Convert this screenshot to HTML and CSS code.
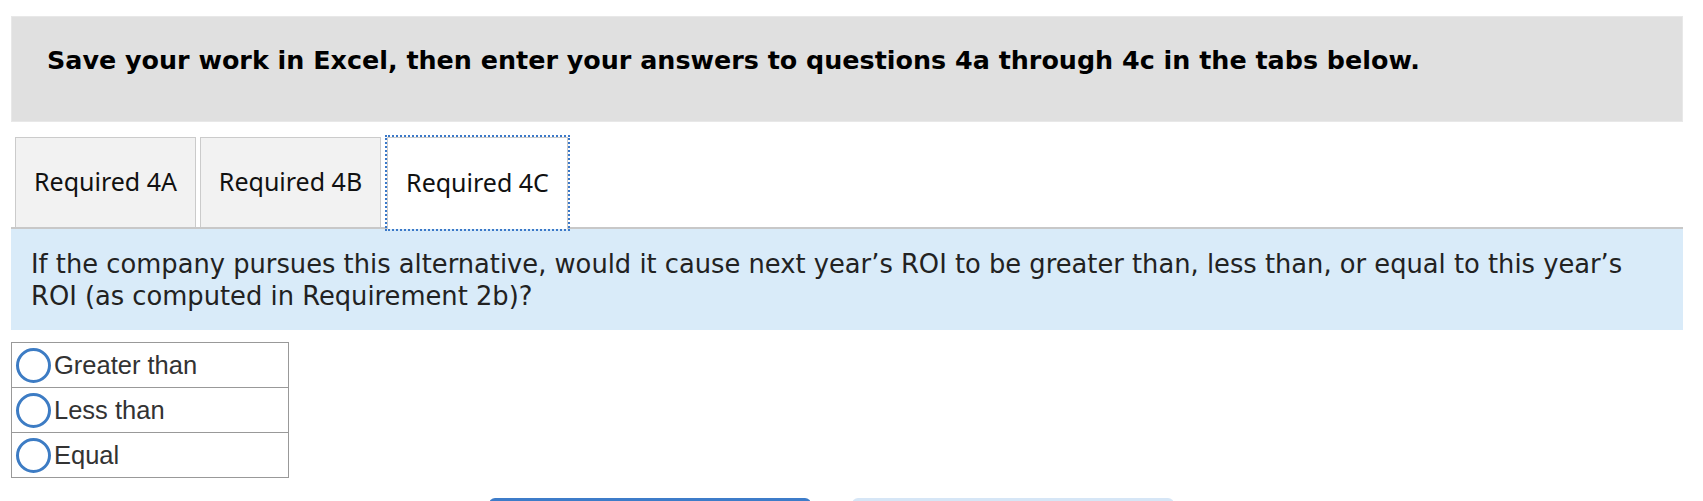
FILE: index.html
```html
<!doctype html>
<html lang="en">
  <head>
    <meta charset="UTF-8" />
    <title>Required 4C</title>
    <link rel="stylesheet" href="styles.css">
  </head>
  <body>
    <div class="instructions">
      Save your work in Excel, then enter your answers to questions 4a through 4c in the tabs below.
    </div>

    <div class="tabs">
      <div class="tab">Required 4A</div>
      <div class="tab">Required 4B</div>
      <div class="tab active">Required 4C</div>
    </div>

    <div class="question">
      If the company pursues this alternative, would it cause next year’s ROI to be greater than, less than, or equal to this year’s ROI (as computed in Requirement 2b)?
    </div>

    <div class="choices">
      <label class="choice"><span class="radio"></span>Greater than</label>
      <label class="choice"><span class="radio"></span>Less than</label>
      <label class="choice"><span class="radio"></span>Equal</label>
    </div>

    <div class="nav">
      <button class="prev"></button>
      <button class="next"></button>
    </div>
  </body>
</html>
```

FILE: styles.css
```css
html,
body {
  height: 100%;
  overflow: hidden;
}
body {
  margin: 0;
  box-sizing: border-box;
  padding: 16px 20px 0 11px;
  background: white;
  font-family: "DejaVu Sans", Verdana, sans-serif;
}
.instructions {
  height: 106px;
  box-sizing: border-box;
  padding: 28px 35px 0;
  background-color: #e0e0e0;
  border: 1px solid #e8e8e8;
  font-weight: bold;
  font-size: 25.4px;
  color: #000;
}
.tabs {
  display: flex;
  gap: 4px;
  margin-top: 15px;
  padding-left: 4px;
  height: 90px;
}
.tab {
  width: 181px;
  box-sizing: border-box;
  display: flex;
  align-items: center;
  justify-content: center;
  padding-bottom: 4px;
  background-color: #f2f2f2;
  border: 1px solid #cbcbcb;
  border-bottom: none;
  font-family: "Noto Sans", "Open Sans", sans-serif;
  font-size: 25px;
  color: #111;
}
.tab.active {
  position: relative;
  z-index: 1;
  margin-left: 2px;
  height: 92px;
  background: white;
  outline: 2px dotted #3a78c8;
}
.question {
  height: 103px;
  box-sizing: border-box;
  padding: 19px 20px 0;
  background-color: #d9ebf9;
  border-top: 2px solid #c8c8c8;
  font-size: 25.75px;
  line-height: 32px;
  color: #222;
}
.choices {
  width: 276px;
  margin-top: 12px;
  border: 1px solid #999;
}
.choice {
  display: flex;
  align-items: center;
  gap: 3px;
  height: 44px;
  padding-left: 4px;
  font-family: "Liberation Sans", Arial, sans-serif;
  font-size: 25.5px;
  color: #333;
}
.choice + .choice {
  border-top: 1px solid #999;
}
.radio {
  width: 29px;
  height: 29px;
  border: 3px solid #3d7cc4;
  border-radius: 50%;
  background: white;
}
.nav {
  display: flex;
  gap: 41px;
  margin: 20px 0 0 478px;
}
.nav button {
  width: 322px;
  height: 40px;
  border: none;
  border-radius: 6px;
}
.nav .prev {
  background-color: #3d7cc9;
}
.nav .next {
  background-color: #d6e6f6;
}
```
